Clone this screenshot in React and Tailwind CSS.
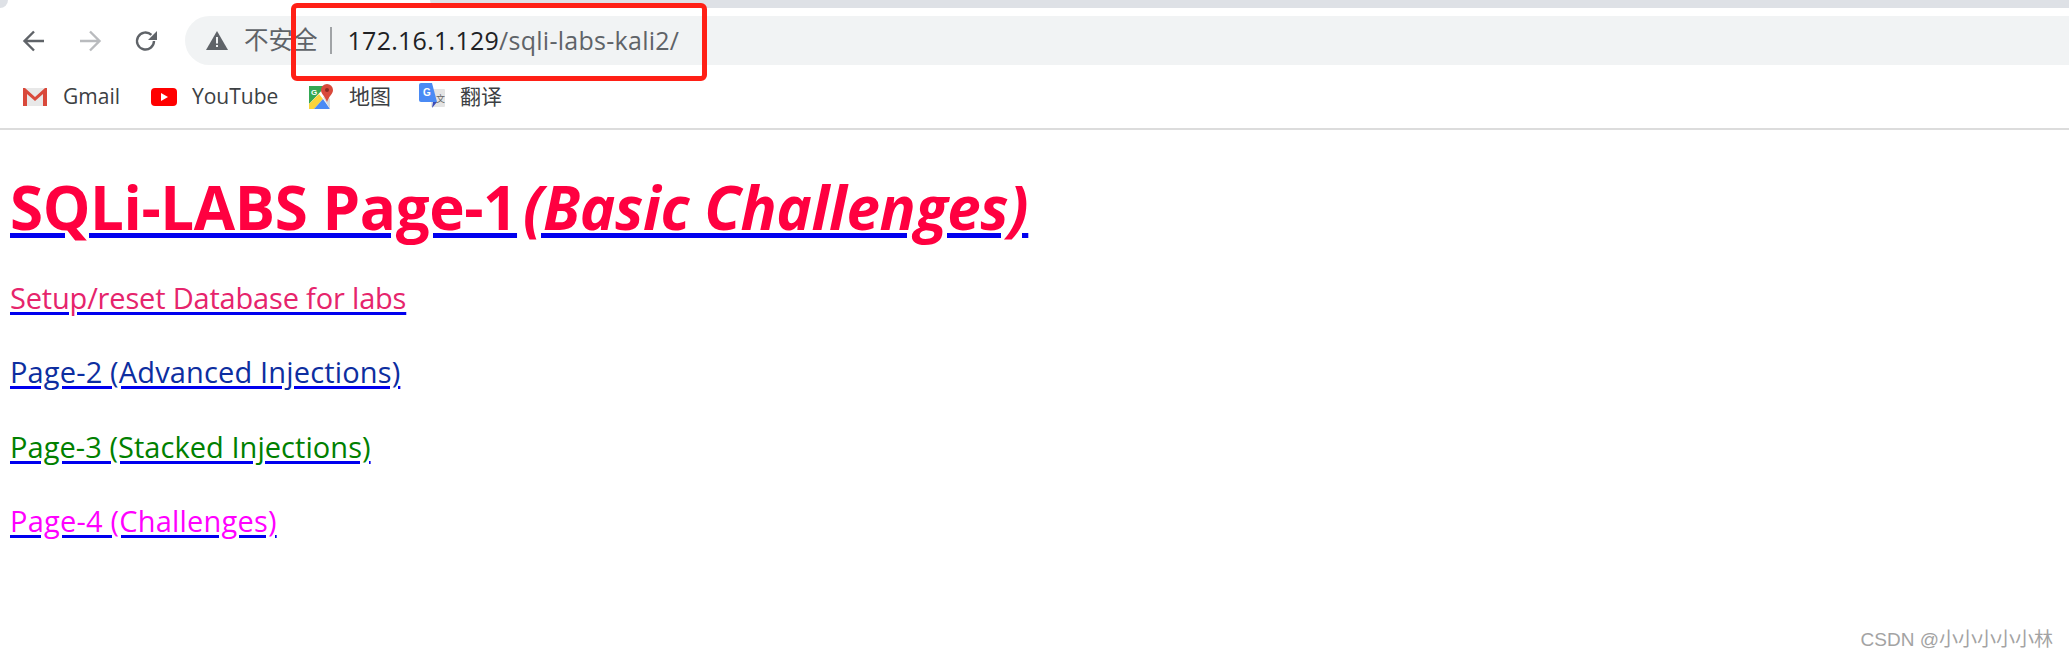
import React from "react";

const sans = "font-['Open_Sans','Noto_Sans_CJK_SC',sans-serif]";

function Gmail() {
  return (
    <svg width="26" height="20" viewBox="0 0 26 20">
      <rect x="1" y="1" width="24" height="18" fill="#e8e8e8" />
      <path d="M1 19V1h2l10 9 10-9h2v18h-4V7l-8 7-8-7v12z" fill="#d9493b" />
    </svg>
  );
}

function YouTube() {
  return (
    <svg width="26" height="20" viewBox="0 0 26 20">
      <rect x="0" y="1" width="26" height="18" rx="4" fill="#ff0000" />
      <path d="M10 6l7 4-7 4z" fill="#fff" />
    </svg>
  );
}

function Maps() {
  return (
    <svg width="26" height="26" viewBox="0 0 26 26">
      <path d="M1 2h17L1 20z" fill="#34a853" />
      <path d="M1 20L11 10l4 5-9 10H1z" fill="#fbd43a" />
      <path d="M6 25l9-10 7 10z" fill="#4a8af4" />
      <path d="M15 13l3-2 4 4v10z" fill="#d9d9d9" />
      <path d="M19 0a6 6 0 0 1 6 6c0 4-4 6-6 12-2-6-6-8-6-12a6 6 0 0 1 6-6z" fill="#d9493b" />
      <circle cx="19" cy="6" r="2" fill="#8c2a20" />
      <text x="3" y="11" fontSize="8" fontWeight="700" fill="#fff" fontFamily="Liberation Sans">G</text>
    </svg>
  );
}

function Translate() {
  return (
    <svg width="26" height="28" viewBox="0 0 26 28">
      <rect x="12" y="6" width="14" height="18" rx="1" fill="#e4e4e4" />
      <path d="M2 0h11l5 19H2a2 2 0 0 1-2-2V2a2 2 0 0 1 2-2z" fill="#4a8af4" />
      <path d="M14 19h4l-5 6z" fill="#3b4cb8" />
      <text x="4" y="13" fontSize="10" fontWeight="700" fill="#fff" fontFamily="Liberation Sans">G</text>
      <text x="17" y="19" fontSize="9" fill="#666" fontFamily="Noto Sans CJK SC">文</text>
    </svg>
  );
}

function Bookmark({ icon, label, width }) {
  return (
    <div className={`flex items-center ${width}`}>
      <span className="flex w-[41px] shrink-0 items-center">{icon}</span>
      <span className="text-[21px] text-[#3c4043]">{label}</span>
    </div>
  );
}

function Link({ color, tracking, children }) {
  return (
    <p className={`mb-[36.4px] text-[29px] leading-[38px] ${tracking}`}>
      <a className="underline decoration-[#0000ee] decoration-[2.5px] underline-offset-[3px]" style={{ color }}>
        {children}
      </a>
    </p>
  );
}

export default function App() {
  return (
    <div className={`relative h-[658px] w-[2069px] overflow-hidden bg-white ${sans}`}>
      <div className="relative h-[130px] border-b-2 border-[#dcdcdc]">
        <div className="absolute left-0 top-0 h-[8px] w-[8px] rounded-br-[8px] bg-[#dee1e6]" />
        <div className="absolute right-0 top-0 h-[8px] w-[1639px] rounded-bl-[8px] bg-[#dee1e6]" />

        <div className="flex h-[81px] items-center pl-[22px]">
          <svg width="24" height="24" viewBox="0 0 24 24" fill="none" stroke="#5f6368" strokeWidth="2.4">
            <path d="M22 12H3M12 2.500l-9.500 9.500 9.500 9.500" />
          </svg>
          <svg className="ml-[32px]" width="24" height="24" viewBox="0 0 24 24" fill="none" stroke="#b9bbbe" strokeWidth="2.4">
            <path d="M2 12h19M12 2.500l9.500 9.500-9.500 9.500" />
          </svg>
          <svg className="ml-[32px]" width="24" height="24" viewBox="0 0 24 24" fill="none">
            <path d="M20 12a8.500 8.500 0 1 1-2.600-6.100" stroke="#5f6368" strokeWidth="2.400" />
            <path d="M23 2v9h-9z" fill="#5f6368" />
          </svg>
          <div className="ml-[27px] flex h-[49px] flex-1 items-center rounded-l-[25px] bg-[#f1f3f4] pl-[21px]">
            <svg width="22" height="19" viewBox="0 0 22 19">
              <path d="M11 0L22 19H0z" fill="#5f6368" />
              <rect x="10" y="6" width="2" height="6.500" fill="#f1f3f4" />
              <rect x="10" y="14" width="2" height="2" fill="#f1f3f4" />
            </svg>
            <span className="ml-[16px] text-[24.500px] text-[#5f6368]">不安全</span>
            <span className="ml-[12px] h-[27px] w-[2px] bg-[#a0a3a6]" />
            <span className="ml-[16px] text-[25px] tracking-[0.27px] text-[#202124]">
              172.16.1.129<span className="text-[#5f6368]">/sqli-labs-kali2/</span>
            </span>
          </div>
        </div>

        <div className="flex h-[32px] items-center pl-[22px]">
          <Bookmark icon={<Gmail />} label="Gmail" width="w-[129px]" />
          <Bookmark icon={<YouTube />} label="YouTube" width="w-[157px]" />
          <Bookmark icon={<Maps />} label="地图" width="w-[111px]" />
          <Bookmark icon={<Translate />} label="翻译" width="w-[110px]" />
        </div>
      </div>

      <div className="pl-[10px] pt-[39px]">
        <h1 className="mb-[34px] text-[60px] font-bold leading-[76px] tracking-[-0.4px] text-[#ff0040]">
          <a className="underline decoration-[#0000ee] decoration-[5px] underline-offset-[3px]">
            SQLi-LABS Page-1<i className="ml-[6px]">(Basic Challenges)</i>
          </a>
        </h1>
        <Link color="#e6246c" tracking="tracking-[-0.18px]">Setup/reset Database for labs</Link>
        <Link color="#0d2ea0" tracking="tracking-[0.15px]">Page-2 (Advanced Injections)</Link>
        <Link color="#008000" tracking="tracking-[0.05px]">Page-3 (Stacked Injections)</Link>
        <Link color="#ff00ff" tracking="tracking-[0.2px]">Page-4 (Challenges)</Link>
      </div>

      <div className="absolute left-[291px] top-[3px] h-[78px] w-[416px] rounded-[6px] border-[5px] border-[#ff2016]" />
      <div className="absolute right-[16px] top-[629px] font-['Liberation_Sans','Noto_Sans_CJK_SC',sans-serif] text-[19px] leading-[22px] text-[#a3a3a3]">
        CSDN @小小小小小林
      </div>
    </div>
  );
}
